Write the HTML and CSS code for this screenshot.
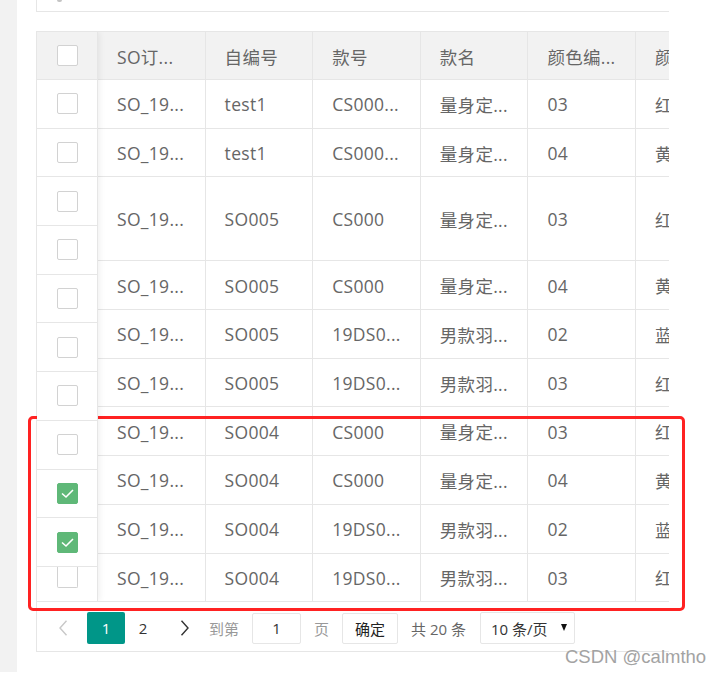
FILE: index.html
```html
<!DOCTYPE html>
<html lang="zh-CN">
<head>
<meta charset="utf-8">
<title>表格</title>
<link rel="stylesheet" href="styles.css">
</head>
<body>
<div class="page">
  <aside class="side"></aside>
  <main class="panel">
    <div class="topbox"><span class="topmark"></span></div>
    <div class="table">
      <div class="grid">
        <div class="fixed">
          <div class="fcell head"><span class="cb"></span></div>
          <div class="fcell"><span class="cb"></span></div>
          <div class="fcell"><span class="cb"></span></div>
          <div class="fcell"><span class="cb"></span></div>
          <div class="fcell"><span class="cb"></span></div>
          <div class="fcell"><span class="cb"></span></div>
          <div class="fcell"><span class="cb"></span></div>
          <div class="fcell"><span class="cb"></span></div>
          <div class="fcell"><span class="cb"></span></div>
          <div class="fcell"><span class="cb on"><svg viewBox="0 0 21 21" width="21" height="21"><polyline points="5,10.5 9,14 16,7" fill="none" stroke="#fff" stroke-width="1.6"/></svg></span></div>
          <div class="fcell"><span class="cb on"><svg viewBox="0 0 21 21" width="21" height="21"><polyline points="5,10.5 9,14 16,7" fill="none" stroke="#fff" stroke-width="1.6"/></svg></span></div>
          <div class="fcell last"><span class="cb cut"></span></div>
        </div>
        <div class="main">
          <div class="row head">
            <div class="cell">SO订...</div><div class="cell">自编号</div><div class="cell">款号</div><div class="cell">款名</div><div class="cell">颜色编...</div><div class="cell">颜色</div>
          </div>
          <div class="row">
            <div class="cell">SO_19...</div><div class="cell">test1</div><div class="cell">CS000...</div><div class="cell">量身定...</div><div class="cell">03</div><div class="cell">红色</div>
          </div>
          <div class="row">
            <div class="cell">SO_19...</div><div class="cell">test1</div><div class="cell">CS000...</div><div class="cell">量身定...</div><div class="cell">04</div><div class="cell">黄色</div>
          </div>
          <div class="row tall">
            <div class="cell">SO_19...</div><div class="cell">SO005</div><div class="cell">CS000</div><div class="cell">量身定...</div><div class="cell">03</div><div class="cell">红色</div>
          </div>
          <div class="row">
            <div class="cell">SO_19...</div><div class="cell">SO005</div><div class="cell">CS000</div><div class="cell">量身定...</div><div class="cell">04</div><div class="cell">黄色</div>
          </div>
          <div class="row">
            <div class="cell">SO_19...</div><div class="cell">SO005</div><div class="cell">19DS0...</div><div class="cell">男款羽...</div><div class="cell">02</div><div class="cell">蓝色</div>
          </div>
          <div class="row">
            <div class="cell">SO_19...</div><div class="cell">SO005</div><div class="cell">19DS0...</div><div class="cell">男款羽...</div><div class="cell">03</div><div class="cell">红色</div>
          </div>
          <div class="row">
            <div class="cell">SO_19...</div><div class="cell">SO004</div><div class="cell">CS000</div><div class="cell">量身定...</div><div class="cell">03</div><div class="cell">红色</div>
          </div>
          <div class="row">
            <div class="cell">SO_19...</div><div class="cell">SO004</div><div class="cell">CS000</div><div class="cell">量身定...</div><div class="cell">04</div><div class="cell">黄色</div>
          </div>
          <div class="row">
            <div class="cell">SO_19...</div><div class="cell">SO004</div><div class="cell">19DS0...</div><div class="cell">男款羽...</div><div class="cell">02</div><div class="cell">蓝色</div>
          </div>
          <div class="row">
            <div class="cell">SO_19...</div><div class="cell">SO004</div><div class="cell">19DS0...</div><div class="cell">男款羽...</div><div class="cell">03</div><div class="cell">红色</div>
          </div>
        </div>
      </div>
      <div class="pager">
        <span class="pg prev"><svg width="10" height="16" viewBox="0 0 10 16"><polyline points="8.5,0.8 2,8 8.5,15.2" fill="none" stroke="#c8c8c8" stroke-width="1.4"/></svg></span>
        <span class="pg cur">1</span>
        <span class="pg num">2</span>
        <span class="pg next"><svg width="10" height="16" viewBox="0 0 10 16"><polyline points="1.5,0.8 8,8 1.5,15.2" fill="none" stroke="#333" stroke-width="1.4"/></svg></span>
        <span class="lbl">到第</span>
        <span class="inp">1</span>
        <span class="lbl">页</span>
        <span class="btn">确定</span>
        <span class="count">共 20 条</span>
        <span class="sel">10 条/页<i class="tri"></i></span>
      </div>
    </div>
  </main>
  <div class="redbox"></div>
  <div class="wm">CSDN @calmtho</div>
</div>
</body>
</html>
```
FILE: styles.css
```css
* { box-sizing: border-box; }
html, body { margin: 0; padding: 0; background: #fff; }
body {
  font-family: "Open Sans", "Noto Sans CJK SC", sans-serif;
  color: #666;
}
.page {
  position: relative;
  display: flex;
  width: 721px;
  height: 675px;
  overflow: hidden;
}
.side {
  flex: none;
  width: 17px;
  height: 672px;
  background: #f2f2f2;
}
.panel {
  flex: none;
  margin-left: 19px;
  width: 633px;
  height: 672px;
  overflow: hidden;
}
.topbox {
  height: 12px;
  border-left: 1px solid #e6e6e6;
  border-bottom: 1px solid #e6e6e6;
}
.topmark {
  display: block;
  width: 5px;
  height: 2px;
  margin-left: 20px;
  background: #c4c4c4;
  border-radius: 0 0 2px 2px;
}
.table {
  margin-top: 19px;
  border-top: 1px solid #e6e6e6;
  border-left: 1px solid #e6e6e6;
  border-bottom: 1px solid #e6e6e6;
}
.grid {
  display: flex;
  height: 570px;
  border-bottom: 1px solid #e6e6e6;
  overflow: hidden;
}
.fixed {
  position: relative;
  z-index: 1;
  flex: none;
  width: 61px;
  border-right: 1px solid #e6e6e6;
  background: #fff;
  box-shadow: 2px 0 6px rgba(0, 0, 0, 0.06);
}
.fcell {
  height: 48.7px;
  border-bottom: 1px solid #e6e6e6;
  display: flex;
  align-items: center;
  justify-content: center;
}
.fcell.head {
  height: 48px;
  background: #f2f2f2;
}
.fcell.last {
  align-items: flex-start;
  border-bottom: none;
}
.cb {
  display: block;
  width: 21px;
  height: 21px;
  border: 1px solid #d2d2d2;
  border-radius: 2px;
  background: #fff;
  margin-left: 1px;
}
.cb.on {
  background: #5fb878;
  border-color: #5fb878;
}
.cb.on svg { display: block; margin: -1px; }
.cb.cut {
  border-top: none;
  height: 21px;
  border-radius: 0 0 2px 2px;
}
.main {
  flex: none;
  width: 700px;
}
.row {
  display: flex;
  height: 48.7px;
}
.row.head {
  height: 48px;
  background: #f2f2f2;
}
.row.tall { height: 84px; }
.cell {
  flex: none;
  width: 107.6px;
  height: 100%;
  border-right: 1px solid #e6e6e6;
  border-bottom: 1px solid #e6e6e6;
  padding-left: 19px;
  padding-top: 1px;
  display: flex;
  align-items: center;
  font-size: 17.5px;
  letter-spacing: 0.3px;
  color: #666;
  white-space: nowrap;
  overflow: hidden;
}
.pager {
  display: flex;
  align-items: center;
  height: 49px;
  padding-top: 10px;
  padding-bottom: 7px;
  font-size: 15px;
  color: #333;
}
.pg {
  display: flex;
  align-items: center;
  justify-content: center;
  height: 32px;
  flex: none;
}
.prev { width: 50px; padding-left: 2px; }
.cur {
  width: 38px;
  background: #009688;
  color: #fff;
  border-radius: 2px;
}
.num { width: 36px; }
.next { width: 48px; }
.lbl { color: #999; margin-right: 13px; }
.inp {
  display: flex;
  align-items: center;
  justify-content: center;
  width: 49px;
  height: 31px;
  border: 1px solid #e6e6e6;
  border-radius: 2px;
  margin-right: 13px;
  color: #333;
}
.btn {
  display: flex;
  align-items: center;
  justify-content: center;
  width: 56px;
  height: 31px;
  border: 1px solid #e6e6e6;
  border-radius: 2px;
  margin-right: 13px;
  color: #222;
}
.count { color: #666; margin-right: 14px; }
.sel {
  display: flex;
  align-items: center;
  width: 95px;
  height: 32px;
  border: 1px solid #e6e6e6;
  border-radius: 2px;
  padding-left: 10px;
  color: #333;
}
.tri {
  display: block;
  width: 0;
  height: 0;
  margin-left: 13px;
  margin-top: -2px;
  border-left: 3.5px solid transparent;
  border-right: 3.5px solid transparent;
  border-top: 7px solid #111;
}
.redbox {
  position: absolute;
  left: 28px;
  top: 416px;
  width: 657px;
  height: 195px;
  border: 3px solid #ff2222;
  border-radius: 5px;
  pointer-events: none;
}
.wm {
  position: absolute;
  left: 565px;
  top: 646px;
  font-family: "Liberation Sans", Arial, sans-serif;
  font-size: 18.5px;
  color: #a3a3a3;
  white-space: nowrap;
}
```
